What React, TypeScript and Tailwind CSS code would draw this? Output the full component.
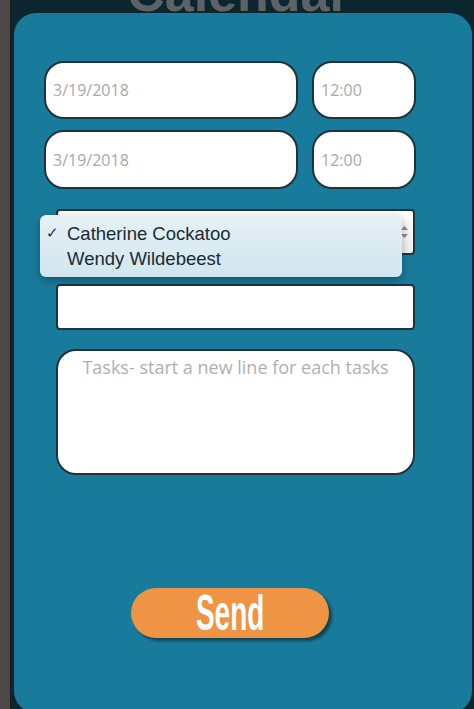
import React from 'react';

const inputFont = { fontFamily: '"Open Sans", "DejaVu Sans", sans-serif' };

export default function App() {
  return (
    <div className="flex h-[709px] w-[474px] overflow-hidden bg-[#0c2630]">
      {/* side strip */}
      <div className="w-[11px] shrink-0 border-r border-[#1b1b1b] bg-[#4d4847]" />

      <div className="flex min-w-0 flex-1 flex-col">
        {/* page title, mostly hidden behind the panel */}
        <div className="flex h-[13px] shrink-0 items-end justify-center overflow-hidden pr-[8px]">
          <span
            className="mb-[-6px] text-[52px] font-bold leading-none text-[#5d6365]"
            style={{ fontFamily: '"Liberation Sans", Arial, sans-serif' }}
          >
            Calendar
          </span>
        </div>

        {/* modal panel */}
        <div className="mb-[-4px] ml-[3px] mr-[2px] flex flex-1 flex-col rounded-[22px] bg-[#197b9b] pt-[48px]">
          <div className="ml-[30px] flex gap-[14px]">
            <input
              readOnly
              placeholder="3/19/2018"
              style={inputFont}
              className="h-[58px] w-[254px] rounded-[20px] border-2 border-[#1f3338] bg-white px-[7px] text-[16px] outline-none placeholder:text-[#a9a9a9]"
            />
            <input
              readOnly
              placeholder="12:00"
              style={inputFont}
              className="h-[58px] w-[104px] rounded-[20px] border-2 border-[#1f3338] bg-white px-[7px] text-[16px] outline-none placeholder:text-[#a9a9a9]"
            />
          </div>
          <div className="ml-[30px] mt-[11px] flex gap-[14px]">
            <input
              readOnly
              placeholder="3/19/2018"
              style={inputFont}
              className="h-[59px] w-[254px] rounded-[20px] border-2 border-[#1f3338] bg-white px-[7px] text-[16px] outline-none placeholder:text-[#a9a9a9]"
            />
            <input
              readOnly
              placeholder="12:00"
              style={inputFont}
              className="h-[59px] w-[104px] rounded-[20px] border-2 border-[#1f3338] bg-white px-[7px] text-[16px] outline-none placeholder:text-[#a9a9a9]"
            />
          </div>

          {/* assignee select with its open menu */}
          <div className="relative ml-[42px] mt-[20px] h-[46px] w-[359px]">
            <div className="flex h-full items-center justify-end rounded-[4px] border-2 border-[#1f3338] bg-gradient-to-b from-white to-[#ececec] pr-[4px]">
              <svg width="9" height="16" viewBox="0 0 9 16" className="text-[#8a8a8a]">
                <path d="M1 6 L4.5 2 L8 6 Z" fill="currentColor" />
                <path d="M1 10 L4.5 14 L8 10 Z" fill="currentColor" />
              </svg>
            </div>
            <div
              className="absolute left-[-16px] top-[6px] flex h-[62px] w-[362px] flex-col justify-center rounded-[6px] bg-gradient-to-b from-[#e6f1f5] to-[#d0e6ef] text-[18.5px] text-[#1c2a31] shadow-[0_3px_8px_rgba(0,0,0,0.3)]"
              style={{ fontFamily: '"Liberation Sans", Helvetica, Arial, sans-serif' }}
            >
              <div className="flex h-[25px] items-center">
                <span className="w-[27px] pl-[6px] text-[15px]">✓</span>
                <span>Catherine Cockatoo</span>
              </div>
              <div className="flex h-[25px] items-center">
                <span className="w-[27px]" />
                <span>Wendy Wildebeest</span>
              </div>
            </div>
          </div>

          <input
            readOnly
            style={inputFont}
            className="ml-[42px] mt-[29px] h-[46px] w-[359px] rounded-[4px] border-2 border-[#1f3338] bg-white px-[7px] text-[16px] outline-none"
          />

          <textarea
            readOnly
            placeholder="Tasks- start a new line for each tasks"
            style={inputFont}
            className="ml-[42px] mt-[19px] h-[126px] w-[359px] resize-none rounded-[20px] border-2 border-[#1f3338] bg-white px-[6px] pt-[3px] text-center text-[18px] outline-none placeholder:text-[#b0b0b0]"
          />

          <div className="ml-[117px] mt-[113px] flex h-[50px] w-[198px] items-center justify-center rounded-full bg-[#ee9444] shadow-[3px_3px_3px_rgba(0,0,0,0.45)]">
            <span
              className="inline-block scale-x-[0.56] text-[50px] font-bold leading-[50px] text-white"
              style={{ fontFamily: '"Liberation Sans", Arial, sans-serif' }}
            >
              Send
            </span>
          </div>
        </div>
      </div>
    </div>
  );
}
